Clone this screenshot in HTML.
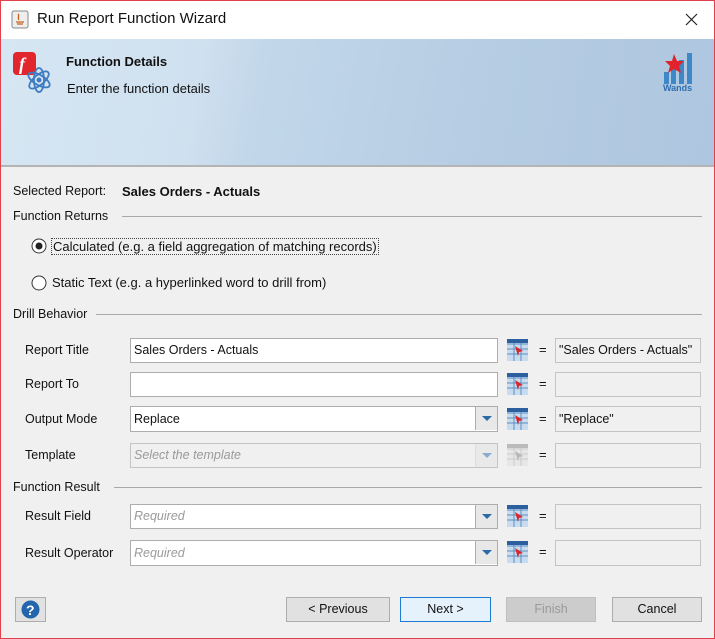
<!DOCTYPE html>
<html><head><style>
*{margin:0;padding:0;box-sizing:border-box}
body{width:715px;height:639px;overflow:hidden;background:#f0f0f0;font-family:"Liberation Sans",sans-serif;font-size:12.5px;color:#111;position:relative}
.a{position:absolute}
.win{left:0;top:0;width:715px;height:639px;border:1px solid #e0414a}
.title{left:1px;top:1px;width:713px;height:38px;background:#fff}
.hdr{left:1px;top:39px;width:713px;height:128px;background:linear-gradient(100deg,#d6e6f3 0%,#cfe0ef 28%,#c2d7ea 36%,#b6cde3 65%,#aec6df 100%);border-bottom:2px solid #b4b4b4}
.sep{height:1px;background:#a9a9a9}
.fld{background:#fff;border:1px solid #adadad;height:25px;padding:0 3px;line-height:23px;white-space:nowrap;overflow:hidden}
.dis{background:#f0f0f0;border:1px solid #c4c4c4}
.ph{color:#9a9a9a;font-style:italic}
.dd{position:absolute;right:0;top:0;width:22px;height:23px;border-left:1px solid #adadad;background:#e8e8e8}
.dd:after{content:"";position:absolute;left:6px;top:9px;border-left:5px solid transparent;border-right:5px solid transparent;border-top:5px solid #2b6aa8}
.btn{height:25px;border:1px solid #adadad;background:#e1e1e1;text-align:center;line-height:23px}
.eq{font-size:13px}
</style></head><body>
<div class="a title"></div>
<svg class="a" style="left:11px;top:10px" width="18" height="19"><rect x="1" y="1" width="16" height="17" rx="2" fill="#eee" stroke="#888"/><path d="M7 4c2 2-1 3 1 6M5 12h8M6 14h6" stroke="#c6601c" fill="none" stroke-width="1.3"/></svg>
<div class="a" style="left:37px;top:10px;font-size:15px">Run Report Function Wizard</div>
<svg class="a" style="left:685px;top:13px" width="13" height="13"><path d="M1 1L12 12M12 1L1 12" stroke="#222" stroke-width="1.2"/></svg>
<div class="a hdr"></div>
<svg class="a" style="left:12px;top:51px" width="42" height="44"><rect x="1" y="1" width="23" height="23" rx="4" fill="#e2262d"/><text x="7" y="19" fill="#fff" font-size="18" font-style="italic" font-weight="bold" font-family="Liberation Serif">f</text><g fill="none" stroke="#3e7bc1" stroke-width="1.8"><ellipse cx="27" cy="29" rx="12" ry="5" transform="rotate(30 27 29)"/><ellipse cx="27" cy="29" rx="12" ry="5" transform="rotate(-40 27 29)"/><ellipse cx="27" cy="29" rx="5" ry="12"/></g><circle cx="27" cy="29" r="2.5" fill="#3e7bc1"/></svg>
<div class="a" style="left:66px;top:54px;font-weight:bold;font-size:13px">Function Details</div>
<div class="a" style="left:67px;top:81px;font-size:13px">Enter the function details</div>
<svg class="a" style="left:660px;top:50px" width="42" height="42"><rect x="4" y="22" width="5" height="12" fill="#3d88c9"/><rect x="11" y="16" width="5" height="18" fill="#3d88c9"/><rect x="19" y="10" width="5" height="24" fill="#3d88c9"/><rect x="27" y="3" width="5" height="31" fill="#3d88c9"/><path d="M14 4l3 7 7 0-5 5 2 7-7-4-6 4 2-7-5-5 7 0z" fill="#e1232b"/><text x="3" y="41" font-size="9" font-weight="bold" fill="#2f6fb0" font-family="Liberation Sans">Wands</text></svg>

<div class="a" style="left:13px;top:184px">Selected Report:</div>
<div class="a" style="left:122px;top:184px;font-weight:bold;font-size:13px">Sales Orders - Actuals</div>
<div class="a" style="left:13px;top:209px">Function Returns</div><div class="a sep" style="left:122px;top:216px;width:580px"></div>
<svg class="a" style="left:31px;top:238px" width="16" height="16"><circle cx="8" cy="8" r="7" fill="#fff" stroke="#333"/><circle cx="8" cy="8" r="3.5" fill="#222"/></svg>
<div class="a" style="left:51px;top:238px;font-size:13px;border:1px dotted #444;padding:0 1px">Calculated (e.g. a field aggregation of matching records)</div>
<svg class="a" style="left:31px;top:275px" width="16" height="16"><circle cx="8" cy="8" r="7" fill="#fff" stroke="#333"/></svg>
<div class="a" style="left:52px;top:275px;font-size:13px">Static Text (e.g. a hyperlinked word to drill from)</div>
<div class="a" style="left:13px;top:307px">Drill Behavior</div><div class="a sep" style="left:96px;top:314px;width:606px"></div>

<div class="a" style="left:25px;top:343px">Report Title</div>
<div class="a fld" style="left:130px;top:338px;width:368px">Sales Orders - Actuals</div>
<div class="a" style="left:25px;top:377px">Report To</div>
<div class="a fld" style="left:130px;top:372px;width:368px"></div>
<div class="a" style="left:25px;top:412px">Output Mode</div>
<div class="a fld" style="left:130px;top:406px;width:368px;height:26px;line-height:24px">Replace<div class="dd"></div></div>
<div class="a" style="left:25px;top:448px">Template</div>
<div class="a fld dis" style="left:130px;top:443px;width:368px"><span class="ph">Select the template</span><div class="dd" style="background:#e4e4e4;border-color:#ccc;opacity:.5"></div></div>
<div class="a" style="left:13px;top:480px">Function Result</div><div class="a sep" style="left:114px;top:487px;width:588px"></div>
<div class="a" style="left:25px;top:509px">Result Field</div>
<div class="a fld" style="left:130px;top:504px;width:368px"><span class="ph">Required</span><div class="dd"></div></div>
<div class="a" style="left:25px;top:546px">Result Operator</div>
<div class="a fld" style="left:130px;top:540px;width:368px;height:26px;line-height:24px"><span class="ph">Required</span><div class="dd"></div></div>

<svg width="0" height="0" style="position:absolute"><defs><g id="ic"><rect x="0" y="0" width="21" height="22" fill="#c9dcef"/><path d="M0 5h21M0 10h21M0 15h21M7 0v22M14 0v22" stroke="#5b8fc6"/><rect x="0" y="0" width="21" height="4" fill="#2c5f9e"/><path d="M8 7l8 5-4 1-1 4z" fill="#d9252b"/></g></defs></svg>
<svg class="a" style="left:507px;top:339px" width="22" height="23"><use href="#ic"/></svg>
<svg class="a" style="left:507px;top:373px" width="22" height="23"><use href="#ic"/></svg>
<svg class="a" style="left:507px;top:408px" width="22" height="23"><use href="#ic"/></svg>
<svg class="a" style="left:507px;top:444px;opacity:.35;filter:grayscale(1)" width="22" height="23"><use href="#ic"/></svg>
<svg class="a" style="left:507px;top:505px" width="22" height="23"><use href="#ic"/></svg>
<svg class="a" style="left:507px;top:541px" width="22" height="23"><use href="#ic"/></svg>
<div class="a eq" style="left:539px;top:342px">=</div>
<div class="a eq" style="left:539px;top:376px">=</div>
<div class="a eq" style="left:539px;top:411px">=</div>
<div class="a eq" style="left:539px;top:447px">=</div>
<div class="a eq" style="left:539px;top:508px">=</div>
<div class="a eq" style="left:539px;top:544px">=</div>
<div class="a fld dis" style="left:555px;top:338px;width:146px;color:#111">"Sales Orders - Actuals"</div>
<div class="a fld dis" style="left:555px;top:372px;width:146px"></div>
<div class="a fld dis" style="left:555px;top:406px;width:146px;height:26px;line-height:24px;color:#111">"Replace"</div>
<div class="a fld dis" style="left:555px;top:443px;width:146px"></div>
<div class="a fld dis" style="left:555px;top:504px;width:146px"></div>
<div class="a fld dis" style="left:555px;top:540px;width:146px;height:26px"></div>

<div class="a btn" style="left:15px;top:597px;width:31px"></div>
<svg class="a" style="left:21px;top:600px" width="19" height="19"><circle cx="9.5" cy="9.5" r="9" fill="#2466ad"/><text x="5" y="15" fill="#fff" font-size="14" font-weight="bold" font-family="Liberation Sans">?</text></svg>
<div class="a btn" style="left:286px;top:597px;width:104px">&lt; Previous</div>
<div class="a btn" style="left:400px;top:597px;width:91px;border-color:#1d7bd6;background:#e5f1fb">Next &gt;</div>
<div class="a btn" style="left:506px;top:597px;width:90px;color:#9a9a9a;background:#cccccc;border-color:#bfbfbf">Finish</div>
<div class="a btn" style="left:612px;top:597px;width:90px">Cancel</div>
<div class="a win"></div>
</body></html>
